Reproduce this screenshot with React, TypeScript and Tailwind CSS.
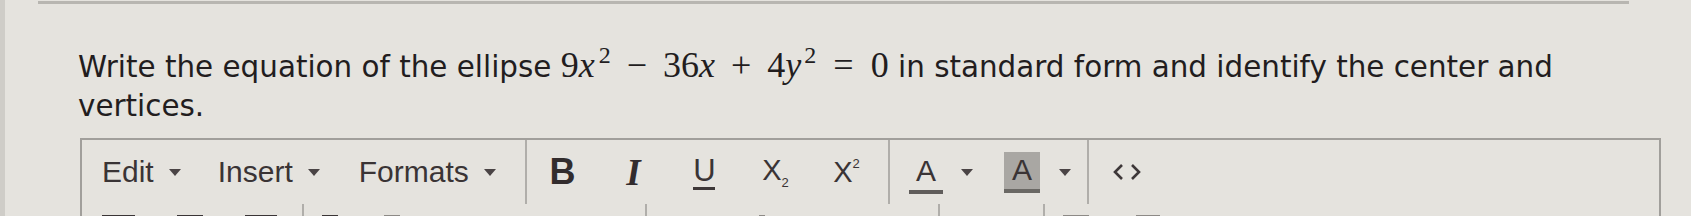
function Caret() {
  return (
    <svg width="12" height="7" viewBox="0 0 12 7" className="shrink-0">
      <polygon points="0,0 12,0 6,7" fill="#4a4445" />
    </svg>
  );
}

function Sep() {
  return <div className="w-[2px] shrink-0 bg-[#b0aeaa]" />;
}

function MenuButton({ label, className = "" }: { label: string; className?: string }) {
  return (
    <div className={`flex items-center gap-[15px] ${className}`}>
      <span className="leading-none">{label}</span>
      <Caret />
    </div>
  );
}

function IconCell({ children }: { children: React.ReactNode }) {
  return <div className="w-[71px] shrink-0 flex items-center justify-center">{children}</div>;
}

function Mark({ w, ml, tone = "dark" }: { w: number; ml: number; tone?: "dark" | "light" }) {
  return (
    <div
      className={`mt-[11px] h-[8px] shrink-0 ${tone === "dark" ? "bg-[#3a3536]" : "bg-[#8d8a86]"}`}
      style={{ width: w, marginLeft: ml }}
    />
  );
}

export default function App() {
  return (
    <div className="w-[1691px] h-[216px] overflow-hidden bg-[#e5e3de] border-l-[5px] border-[#cfcdc8] text-[#221d1e]">
      <div className="ml-[33px] mt-[1px] w-[1591px] h-[3px] bg-[#b8b6b1]" />

      <p className="ml-[73px] mt-[41px] font-['DejaVu_Sans',sans-serif] text-[29.4px] leading-[39px] whitespace-nowrap">
        Write the equation of the ellipse{" "}
        <span className="font-['Liberation_Serif',serif] text-[36px] leading-[20px]">
          9<i>x</i>
          <span className="text-[24px] align-[14px] ml-[4px]">2</span>
          <span className="mx-[16px]">−</span>
          36<i>x</i>
          <span className="mx-[16px]">+</span>
          4<i>y</i>
          <span className="text-[24px] align-[14px] ml-[3px]">2</span>
          <span className="mx-[17px]">=</span>0
        </span>{" "}
        in standard form and identify the center and
        <br />
        vertices.
      </p>

      <div className="ml-[75px] mt-[12px] w-[1581px] h-[90px] border-2 border-b-0 border-[#a19f9b] font-['Liberation_Sans',sans-serif] text-[#3a3435]">
        <div className="flex h-[64px]">
          <div className="w-[443px] shrink-0 flex items-center pl-[20px] text-[30px]">
            <MenuButton label="Edit" />
            <MenuButton label="Insert" className="ml-[37px] gap-[13px]" />
            <MenuButton label="Formats" className="ml-[39px] gap-[13px]" />
          </div>
          <Sep />
          <div className="w-[361px] shrink-0 flex">
            <IconCell>
              <span className="font-bold text-[36px] leading-none text-[#322c2d]">B</span>
            </IconCell>
            <IconCell>
              <span className="font-['Liberation_Serif',serif] italic font-bold text-[37px] leading-none text-[#322c2d]">
                I
              </span>
            </IconCell>
            <IconCell>
              <div className="flex flex-col items-center">
                <span className="text-[31px] leading-none">U</span>
                <div className="mt-[1px] w-[22px] h-[3px] bg-[#3d3738]" />
              </div>
            </IconCell>
            <IconCell>
              <span className="text-[29px] leading-none">
                X<span className="text-[13px] align-[-7px]">2</span>
              </span>
            </IconCell>
            <IconCell>
              <span className="text-[29px] leading-none">
                X<span className="text-[13px] align-[14px]">2</span>
              </span>
            </IconCell>
          </div>
          <Sep />
          <div className="w-[197px] shrink-0 flex items-center">
            <div className="ml-[19px] w-[34px] flex flex-col items-center pt-[6px]">
              <span className="text-[30px] leading-none">A</span>
              <div className="mt-[4px] w-[34px] h-[4px] bg-[#605d5b]" />
            </div>
            <div className="ml-[18px]">
              <Caret />
            </div>
            <div className="ml-[31px] w-[36px] h-[41px] bg-[#a9a7a3] flex flex-col items-center justify-end">
              <span className="text-[30px] leading-none text-[#3a3435]">A</span>
              <div className="mt-[4px] w-full h-[4px] bg-[#6a6864]" />
            </div>
            <div className="ml-[19px]">
              <Caret />
            </div>
          </div>
          <Sep />
          <div className="flex items-center pl-[23px]">
            <svg width="30" height="18" viewBox="0 0 30 18">
              <polyline points="10,2 3,9 10,16" fill="none" stroke="#3d3738" strokeWidth="2.6" />
              <polyline points="20,2 27,9 20,16" fill="none" stroke="#3d3738" strokeWidth="2.6" />
            </svg>
          </div>
        </div>

        <div className="flex h-[26px]">
          <div className="w-[220px] shrink-0 flex">
            <Mark w={33} ml={20} />
            <Mark w={26} ml={42} />
            <Mark w={32} ml={42} />
          </div>
          <Sep />
          <div className="w-[341px] shrink-0 flex">
            <Mark w={16} ml={18} />
            <Mark w={16} ml={46} tone="light" />
          </div>
          <Sep />
          <div className="w-[291px] shrink-0 flex">
            <Mark w={6} ml={112} tone="light" />
          </div>
          <Sep />
          <div className="w-[103px] shrink-0" />
          <Sep />
          <div className="flex">
            <Mark w={26} ml={18} tone="light" />
            <Mark w={24} ml={47} tone="light" />
          </div>
        </div>
      </div>
    </div>
  );
}
